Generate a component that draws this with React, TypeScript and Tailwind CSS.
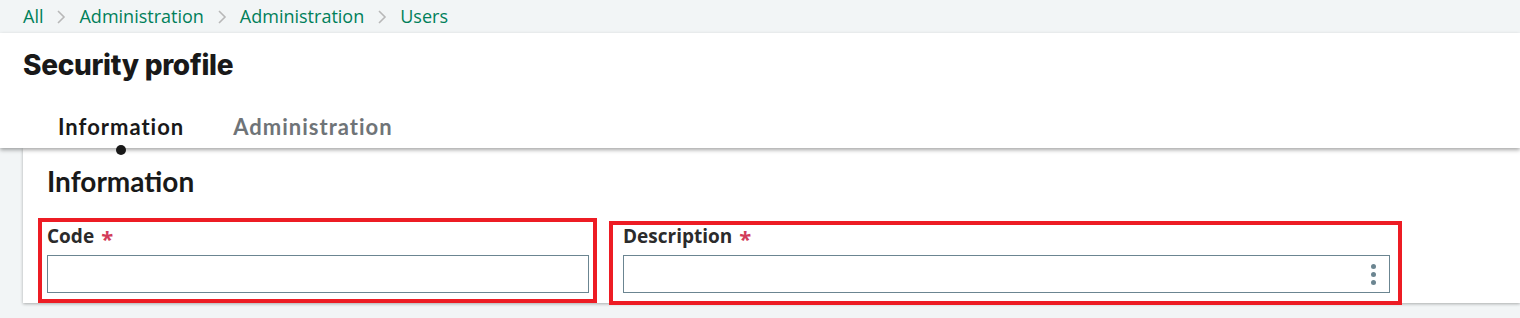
import React from "react";

const crumbs = ["All", "Administration", "Administration", "Users"];

function Chevron() {
  return (
    <svg width="10" height="16" viewBox="0 0 10 16" className="shrink-0">
      <polyline
        points="2,2 8,8 2,14"
        fill="none"
        stroke="#b8b8b8"
        strokeWidth="1.6"
      />
    </svg>
  );
}

function Field({
  label,
  kebab,
  className,
  labelClass,
}: {
  label: string;
  kebab?: boolean;
  className: string;
  labelClass: string;
}) {
  return (
    <div className={`border-[4px] border-[#ed1c24] ${className}`}>
      <div
        className={`flex items-start gap-[7px] text-[19px] font-bold leading-[22px] text-[#2b2b2b] ${labelClass}`}
      >
        <span>{label}</span>
        <span className="text-[22px] font-bold leading-[26px] text-[#d23c5a]">*</span>
      </div>
      <div className="flex h-[38px] items-center justify-end border border-[#6b8591] bg-white pr-[13px]">
        {kebab && (
          <div className="flex flex-col gap-[3px]">
            <span className="h-[5px] w-[5px] rounded-full bg-[#6b8591]" />
            <span className="h-[5px] w-[5px] rounded-full bg-[#6b8591]" />
            <span className="h-[5px] w-[5px] rounded-full bg-[#6b8591]" />
          </div>
        )}
      </div>
    </div>
  );
}

export default function App() {
  return (
    <div className="h-[318px] w-[1520px] overflow-hidden bg-[#f2f5f6] font-['Open_Sans',sans-serif]">
      {/* breadcrumb */}
      <div className="flex h-[33px] items-center gap-[13px] pl-[23px] text-[18px] text-[#00805a]">
        {crumbs.map((c, i) => (
          <React.Fragment key={i}>
            {i > 0 && <Chevron />}
            <span>{c}</span>
          </React.Fragment>
        ))}
      </div>

      {/* page header */}
      <div className="relative z-10 h-[115px] bg-white pl-[23px] pt-[14px] shadow-[0_2px_4px_rgba(0,0,0,0.35)]">
        <h1 className="font-['Inter',sans-serif] text-[28px] font-extrabold leading-[36px] tracking-[-0.3px] text-[#191919]">
          Security profile
        </h1>
        <div className="mt-[30px] flex items-center gap-[49px] pl-[35px] font-['Lato',sans-serif] text-[22px] font-bold leading-[28px] tracking-[1px]">
          <div className="relative text-[#191919]">
            Information
            <span className="absolute -bottom-[14px] left-1/2 h-[10px] w-[10px] -translate-x-1/2 rounded-full bg-[#191919]" />
          </div>
          <div className="text-[#6f7478]">Administration</div>
        </div>
      </div>

      {/* content card */}
      <div className="ml-[23px] h-[155px] bg-white shadow-[0_1px_3px_rgba(0,0,0,0.3)]">
        <h2 className="pl-[24px] pt-[15px] font-['Lato',sans-serif] text-[28px] font-bold leading-[36px] text-[#191919]">
          Information
        </h2>
        <div className="mt-[19px] flex items-start gap-[12px] pl-[15px]">
          <Field
            label="Code"
            className="h-[85px] w-[559px] pl-[5px] pr-[4px]"
            labelClass="h-[33px] pt-[3px]"
          />
          <Field
            label="Description"
            kebab
            className="mt-[3px] h-[84px] w-[793px] pl-[10px] pr-[8px]"
            labelClass="h-[30px] pt-[0px]"
          />
        </div>
      </div>
    </div>
  );
}
